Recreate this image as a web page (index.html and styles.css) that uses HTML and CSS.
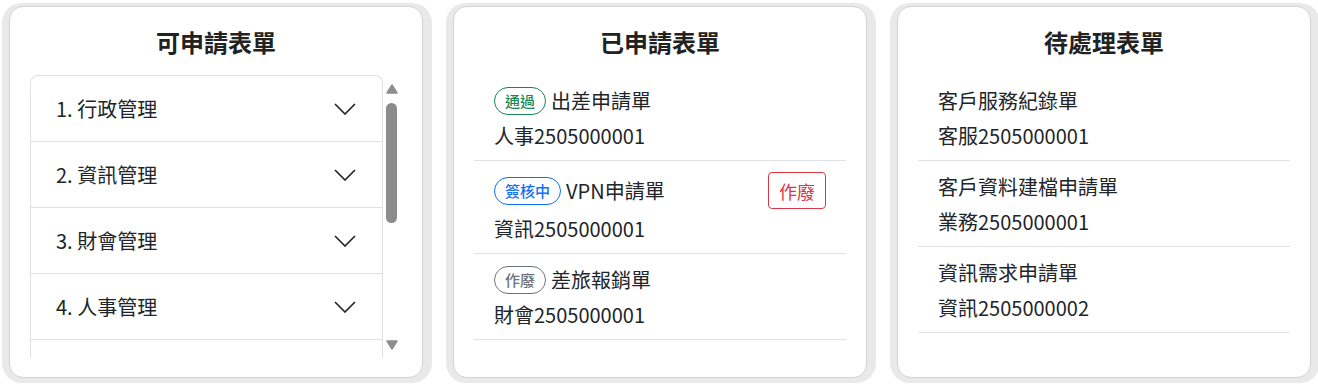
FILE: index.html
```html
<!DOCTYPE html>
<html lang="zh-Hant">
<head>
    <meta charset="UTF-8">
    <meta name="viewport" content="width=device-width, initial-scale=1.0">
    <title>表單中心</title>
    <link rel="stylesheet" href="styles.css">
</head>
<body>
    <div class="board">
        <div class="panel">
            <div class="card">
                <h2 class="card-title">可申請表單</h2>
                <div class="scroll-box">
                    <ul class="category-list">
                        <li class="category">
                            <span>1. 行政管理</span>
                            <svg class="chevron" width="22" height="12" viewBox="0 0 22 12"><polyline points="1,1 11,11 21,1" fill="none" stroke="#222" stroke-width="1.6"/></svg>
                        </li>
                        <li class="category">
                            <span>2. 資訊管理</span>
                            <svg class="chevron" width="22" height="12" viewBox="0 0 22 12"><polyline points="1,1 11,11 21,1" fill="none" stroke="#222" stroke-width="1.6"/></svg>
                        </li>
                        <li class="category">
                            <span>3. 財會管理</span>
                            <svg class="chevron" width="22" height="12" viewBox="0 0 22 12"><polyline points="1,1 11,11 21,1" fill="none" stroke="#222" stroke-width="1.6"/></svg>
                        </li>
                        <li class="category">
                            <span>4. 人事管理</span>
                            <svg class="chevron" width="22" height="12" viewBox="0 0 22 12"><polyline points="1,1 11,11 21,1" fill="none" stroke="#222" stroke-width="1.6"/></svg>
                        </li>
                        <li class="category"></li>
                    </ul>
                    <div class="scrollbar">
                        <svg class="arrow" width="12" height="10" viewBox="0 0 12 10"><path d="M6 1 L11 9 H1 Z" fill="#8e8e8e" stroke="#8e8e8e" stroke-width="1.5" stroke-linejoin="round"/></svg>
                        <div class="thumb"></div>
                        <svg class="arrow arrow-down" width="12" height="10" viewBox="0 0 12 10"><path d="M1 1 H11 L6 9 Z" fill="#8e8e8e" stroke="#8e8e8e" stroke-width="1.5" stroke-linejoin="round"/></svg>
                    </div>
                </div>
            </div>
        </div>

        <div class="panel">
            <div class="card">
                <h2 class="card-title">已申請表單</h2>
                <ul class="form-list">
                    <li class="form-item">
                        <div class="form-row">
                            <span class="badge badge-pass">通過</span>
                            <span>出差申請單</span>
                        </div>
                        <div class="form-no">人事2505000001</div>
                    </li>
                    <li class="form-item">
                        <div class="form-row">
                            <span class="badge badge-review">簽核中</span>
                            <span>VPN申請單</span>
                            <button class="void-button">作廢</button>
                        </div>
                        <div class="form-no">資訊2505000001</div>
                    </li>
                    <li class="form-item">
                        <div class="form-row">
                            <span class="badge badge-void">作廢</span>
                            <span>差旅報銷單</span>
                        </div>
                        <div class="form-no">財會2505000001</div>
                    </li>
                </ul>
            </div>
        </div>

        <div class="panel">
            <div class="card">
                <h2 class="card-title">待處理表單</h2>
                <ul class="form-list">
                    <li class="form-item">
                        <div class="form-row">客戶服務紀錄單</div>
                        <div class="form-no">客服2505000001</div>
                    </li>
                    <li class="form-item">
                        <div class="form-row">客戶資料建檔申請單</div>
                        <div class="form-no">業務2505000001</div>
                    </li>
                    <li class="form-item">
                        <div class="form-row">資訊需求申請單</div>
                        <div class="form-no">資訊2505000002</div>
                    </li>
                </ul>
            </div>
        </div>
    </div>
</body>
</html>
```

FILE: styles.css
```css
body {
    margin: 0;
    padding: 0;
    background-color: #fff;
    font-family: "Noto Sans CJK TC", "Noto Sans", sans-serif;
    color: #212529;
    overflow: hidden;
}
ul {
    list-style: none;
    margin: 0;
    padding: 0;
}
.board {
    display: flex;
    gap: 14px;
    padding: 3px 0 0 2px;
    width: 1340px;
}
.panel {
    flex: 0 0 430px;
    height: 380px;
    box-sizing: border-box;
    padding: 3px 9px 5px 7px;
    background-color: #e9e9e9;
    border-radius: 20px;
}
.card {
    height: 100%;
    box-sizing: border-box;
    padding: 19px 20px 0;
    background-color: #fff;
    border: 1px solid #d3d3d3;
    border-radius: 14px;
}
.card-title {
    margin: 0 0 17px;
    font-size: 24px;
    line-height: 32px;
    font-weight: bold;
    text-align: center;
    color: #222;
}

/* 可申請表單 */
.scroll-box {
    display: flex;
    height: 283px;
    margin-top: 1px;
    overflow: hidden;
}
.category-list {
    flex: 1;
    border: 1px solid #dee2e6;
    border-bottom: none;
    border-radius: 8px 8px 0 0;
}
.category {
    display: flex;
    align-items: center;
    justify-content: space-between;
    height: 65px;
    padding: 0 26px 0 25px;
    border-bottom: 1px solid #dee2e6;
    font-size: 20px;
}
.scrollbar {
    flex: 0 0 17px;
    display: flex;
    flex-direction: column;
    align-items: center;
    padding: 9px 0 8px;
    box-sizing: border-box;
    margin-right: 2px;
}
.thumb {
    width: 11px;
    height: 120px;
    margin-top: 9px;
    background-color: #8b8b8b;
    border-radius: 6px;
}
.arrow-down {
    margin-top: auto;
}

/* 已申請 / 待處理 */
.form-item {
    padding: 11px 20px 11px;
    border-bottom: 1px solid #dee2e6;
}
.form-row {
    display: flex;
    align-items: center;
    min-height: 30px;
    font-size: 20px;
    line-height: 30px;
}
.form-no {
    margin-top: 6px;
    font-size: 20px;
    line-height: 27px;
}
.badge {
    height: 28px;
    box-sizing: border-box;
    margin-right: 5px;
    padding: 0 10px;
    border: 1px solid;
    border-radius: 14px;
    font-size: 15px;
    font-weight: 500;
    line-height: 26px;
}
.badge-pass {
    color: #198754;
    border-color: #198754;
}
.badge-review {
    color: #0d6efd;
    border-color: #0d6efd;
}
.badge-void {
    color: #6c757d;
    border-color: #6c757d;
}
.void-button {
    margin-left: auto;
    height: 37px;
    padding: 0 10px;
    background-color: #fff;
    border: 1px solid #dc3545;
    border-radius: 4px;
    color: #dc3545;
    font-family: inherit;
    font-size: 18px;
    cursor: pointer;
}
```
